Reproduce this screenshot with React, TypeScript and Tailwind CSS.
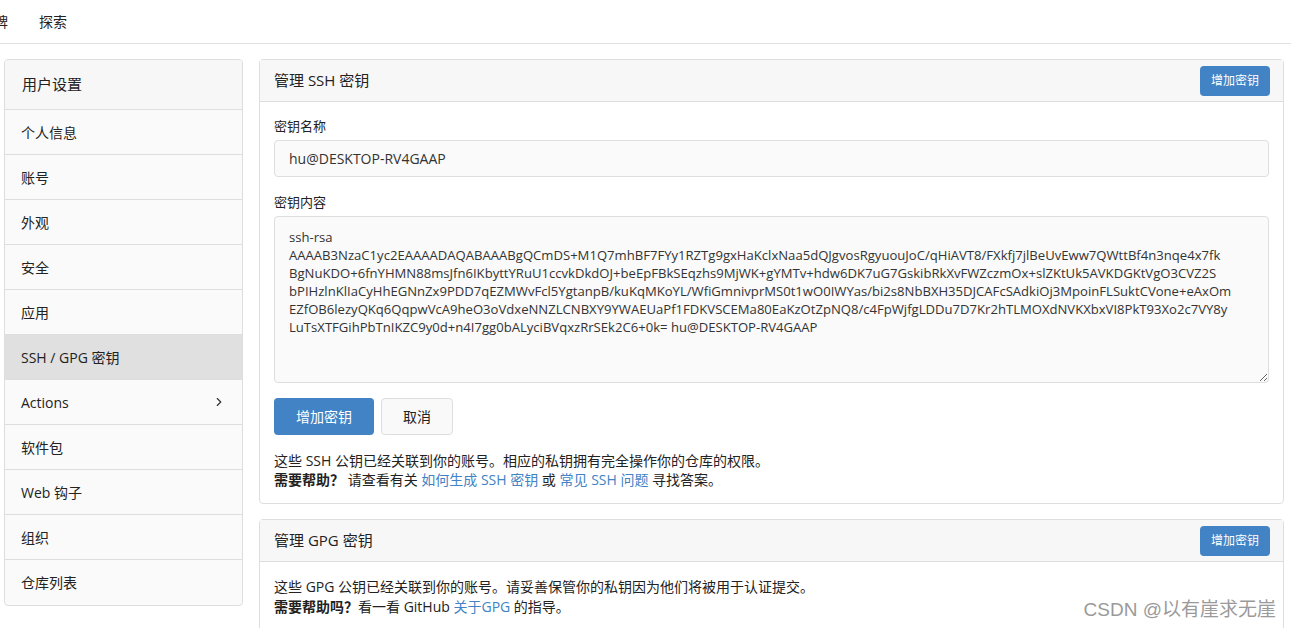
import React from 'react';
import { ChevronRight } from 'lucide-react';

const sshKey = [
  'ssh-rsa',
  'AAAAB3NzaC1yc2EAAAADAQABAAABgQCmDS+M1Q7mhBF7FYy1RZTg9gxHaKclxNaa5dQJgvosRgyuouJoC/qHiAVT8/FXkfj7jlBeUvEww7QWttBf4n3nqe4x7fk',
  'BgNuKDO+6fnYHMN88msJfn6IKbyttYRuU1ccvkDkdOJ+beEpFBkSEqzhs9MjWK+gYMTv+hdw6DK7uG7GskibRkXvFWZczmOx+slZKtUk5AVKDGKtVgO3CVZ2S',
  'bPIHzlnKlIaCyHhEGNnZx9PDD7qEZMWvFcl5YgtanpB/kuKqMKoYL/WfiGmnivprMS0t1wO0IWYas/bi2s8NbBXH35DJCAFcSAdkiOj3MpoinFLSuktCVone+eAxOm',
  'EZfOB6lezyQKq6QqpwVcA9heO3oVdxeNNZLCNBXY9YWAEUaPf1FDKVSCEMa80EaKzOtZpNQ8/c4FpWjfgLDDu7D7Kr2hTLMOXdNVKXbxVI8PkT93Xo2c7VY8y',
  'LuTsXTFGihPbTnIKZC9y0d+n4I7gg0bALyciBVqxzRrSEk2C6+0k= hu@DESKTOP-RV4GAAP',
].join('\n');

const menu = ['个人信息', '账号', '外观', '安全', '应用', 'SSH / GPG 密钥', 'Actions', '软件包', 'Web 钩子', '组织', '仓库列表'];

export default function App() {
  return (
    <div className="relative min-h-[628px] bg-white text-[#333] font-['Open_Sans','Noto_Sans_CJK_SC',sans-serif] text-[14px] overflow-hidden">
      <div className="h-[44px] border-b border-[#e0e0e0] flex items-center gap-[31px] text-[14px] text-[#222]">
        <span className="-ml-[6px]">牌</span>
        <span>探索</span>
      </div>

      <div className="flex gap-[16px] pl-[4px] pr-[7px] pt-[15px]">
        <div className="w-[239px] shrink-0 self-start border border-[#dedede] rounded-[4px] bg-[#fafafa] overflow-hidden">
          <div className="h-[50px] bg-[#f7f7f7] flex items-center px-[17px] text-[15px] text-[#222] border-b border-[#dedede]">
            用户设置
          </div>
          {menu.map((m, i) => (
            <SettingsTab key={m} label={m} active={m === 'SSH / GPG 密钥'} chevron={m === 'Actions'} last={i === menu.length - 1} />
          ))}
        </div>

        <div className="flex-1 flex flex-col gap-[15px]">
          <div className="border border-[#dedede] rounded-[4px]">
            <div className="h-[42px] bg-[#f7f7f7] border-b border-[#dedede] flex items-center justify-between pl-[14px] pr-[13px]">
              <h3 className="text-[15px] text-[#222]">管理 SSH 密钥</h3>
              <button className="h-[30px] px-[11px] bg-[#4183c4] text-white text-[12px] rounded-[4px]">增加密钥</button>
            </div>
            <div className="px-[14px] pt-[15px] pb-[14px]">
              <label className="block text-[13px] text-[#222] leading-[18px] mb-[5px]">密钥名称</label>
              <input
                type="text"
                defaultValue="hu@DESKTOP-RV4GAAP"
                className="w-full h-[37px] px-[14px] bg-[#fafafa] border border-[#dedede] rounded-[4px] text-[14px] text-[#333] outline-none"
              />
              <label className="block text-[13px] text-[#222] leading-[18px] mt-[16px] mb-[5px]">密钥内容</label>
              <textarea
                readOnly
                wrap="off"
                defaultValue={sshKey}
                className="block w-full h-[167px] px-[14px] pt-[11px] bg-[#fafafa] border border-[#dedede] rounded-[4px] text-[13.1px] leading-[18px] text-[#333] outline-none overflow-hidden resize-y"
              />
              <div className="flex gap-[7px] mt-[15px]">
                <button className="w-[100px] h-[37px] bg-[#4183c4] text-white text-[14px] rounded-[4px]">增加密钥</button>
                <button className="w-[72px] h-[37px] bg-[#f9f9f9] border border-[#dedede] text-[#222] text-[14px] rounded-[4px]">取消</button>
              </div>
              <div className="mt-[16px] text-[14px] leading-[19px] text-[#222]">
                <p>这些 SSH 公钥已经关联到你的账号。相应的私钥拥有完全操作你的仓库的权限。</p>
                <p>
                  <strong className="font-bold">需要帮助？</strong> 请查看有关 <a className="text-[#4183c4]">如何生成 SSH 密钥</a> 或 <a className="text-[#4183c4]">常见 SSH 问题</a> 寻找答案。
                </p>
              </div>
            </div>
          </div>

          <div className="border border-[#dedede] rounded-[4px]">
            <div className="h-[42px] bg-[#f7f7f7] border-b border-[#dedede] flex items-center justify-between pl-[14px] pr-[13px]">
              <h3 className="text-[15px] text-[#222]">管理 GPG 密钥</h3>
              <button className="h-[30px] px-[11px] bg-[#4183c4] text-white text-[12px] rounded-[4px]">增加密钥</button>
            </div>
            <div className="px-[14px] pt-[15px] pb-[14px] text-[14px] leading-[20px] text-[#222]">
              <p>这些 GPG 公钥已经关联到你的账号。请妥善保管你的私钥因为他们将被用于认证提交。</p>
              <p>
                <strong className="font-bold">需要帮助吗？</strong>看一看 GitHub <a className="text-[#4183c4]">关于GPG</a> 的指导。
              </p>
            </div>
          </div>
        </div>
      </div>

      <div className="absolute right-[15px] bottom-[8px] text-[19px] text-[#9a9a9a] [text-shadow:0_0_2px_#fff] font-['Liberation_Sans','Noto_Sans_CJK_SC',sans-serif]">
        CSDN @以有崖求无崖
      </div>
    </div>
  );
}

const SettingsTab = ({ label, active = false, chevron = false, last = false }: { label: string; active?: boolean; chevron?: boolean; last?: boolean }) => (
  <div
    className={`h-[45px] flex items-center justify-between pl-[16px] pr-[16px] text-[14px] text-[#222] ${last ? 'h-[44px]' : 'h-[44px] border-b border-[#dedede]'} ${active ? 'bg-[#e0e0e0]' : ''}`}
  >
    <span>{label}</span>
    {chevron && <ChevronRight size={14} strokeWidth={2} className="text-[#333]" />}
  </div>
);
